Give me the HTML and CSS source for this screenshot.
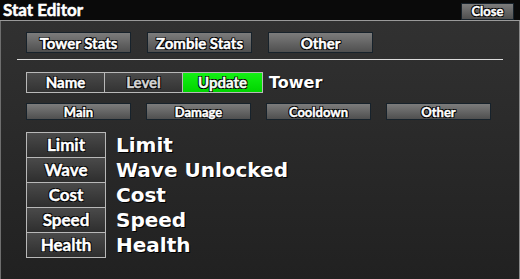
FILE: index.html
```html
<!DOCTYPE html>
<html lang="en">
<head>
    <meta charset="UTF-8">
    <title>Stat Editor</title>
    <link rel="stylesheet" href="styles.css">
</head>
<body>
    <div class="window">
        <div class="titlebar">
            <span class="title">Stat Editor</span>
            <button class="btn close-btn">Close</button>
        </div>
        <div class="content">
            <div class="category-row">
                <button class="btn big">Tower Stats</button>
                <button class="btn big">Zombie Stats</button>
                <button class="btn big">Other</button>
            </div>
            <div class="divider"></div>
            <div class="tab-row">
                <div class="tabs">
                    <div class="tab">Name</div>
                    <div class="tab dim">Level</div>
                    <div class="tab active">Update</div>
                </div>
                <span class="tab-title">Tower</span>
            </div>
            <div class="section-row">
                <button class="btn small">Main</button>
                <button class="btn small">Damage</button>
                <button class="btn small">Cooldown</button>
                <button class="btn small">Other</button>
            </div>
            <div class="stats">
                <div class="stat"><div class="stat-key">Limit</div><span class="stat-name">Limit</span></div>
                <div class="stat"><div class="stat-key">Wave</div><span class="stat-name">Wave Unlocked</span></div>
                <div class="stat"><div class="stat-key">Cost</div><span class="stat-name">Cost</span></div>
                <div class="stat"><div class="stat-key">Speed</div><span class="stat-name">Speed</span></div>
                <div class="stat"><div class="stat-key">Health</div><span class="stat-name">Health</span></div>
            </div>
        </div>
    </div>
</body>
</html>
```

FILE: styles.css
```css
html, body {
    margin: 0;
    padding: 0;
    background: #222;
}
body {
    font-family: Lato, "Liberation Sans", sans-serif;
    color: #fff;
}
.window {
    width: 520px;
    height: 279px;
    display: flex;
    flex-direction: column;
    overflow: hidden;
}
.titlebar {
    height: 20px;
    background: #0a0a0a;
    border-bottom: 1px solid #9a9a9a;
    display: flex;
    align-items: center;
    justify-content: space-between;
}
.title {
    font-weight: 700;
    font-size: 17px;
    padding-left: 3px;
    line-height: 20px;
    -webkit-text-stroke: 0.5px #fff;
}
.btn {
    font-family: Lato, "Liberation Sans", sans-serif;
    font-weight: 700;
    color: #fff;
    background: linear-gradient(#7c7c7c, #4f4f4f);
    border: 1px solid #17222b;
    padding: 0;
    margin: 0;
    -webkit-text-stroke: 0.4px #fff;
    text-shadow: -1px -1px 0 #000, 1px -1px 0 #000, -1px 1px 0 #000, 1px 1px 0 #000,
                 0 1px 0 #000, 0 -1px 0 #000, 1px 0 0 #000, -1px 0 0 #000;
    box-sizing: border-box;
}
.close-btn {
    width: 53px;
    height: 17px;
    font-size: 13px;
    line-height: 14px;
    margin-right: 6px;
    margin-top: 2px;
}
.content {
    flex: 1;
    background: linear-gradient(#313131, #212121);
    border-left: 1px solid #6e6e6e;
    border-right: 1px solid #8a8a8a;
    padding-left: 25px;
}
.category-row {
    display: flex;
    gap: 16px;
    margin-top: 11px;
}
.big {
    width: 105px;
    height: 21px;
    font-size: 15px;
    line-height: 18px;
}
.divider {
    height: 1px;
    background: #dcdcdc;
    margin: 6px 0 0 -9px;
    width: 486px;
}
.tab-row {
    display: flex;
    align-items: center;
    margin-top: 12px;
}
.tabs {
    display: flex;
    height: 21px;
}
.tab {
    box-sizing: border-box;
    width: 79px;
    height: 21px;
    margin-right: -1px;
    border: 1px solid #b8b8b8;
    background: linear-gradient(#4a4a4a, #333);
    font-weight: 700;
    font-size: 15px;
    line-height: 19px;
    text-align: center;
    -webkit-text-stroke: 0.4px currentColor;
    text-shadow: -1px -1px 0 #000, 1px -1px 0 #000, -1px 1px 0 #000, 1px 1px 0 #000;
}
.tab.dim {
    color: #d4d4d4;
}
.tab.active {
    width: 81px;
    background: linear-gradient(#14f014, #00d400);
    color: #f4fff4;
}
.tab-title {
    font-family: "DejaVu Sans", sans-serif;
    font-weight: 700;
    font-size: 16px;
    margin-left: 7px;
    text-shadow: 1px 1px 0 #000;
}
.section-row {
    display: flex;
    gap: 15px;
    margin-top: 10px;
}
.small {
    width: 105px;
    height: 17px;
    font-size: 13px;
    line-height: 14px;
}
.stats {
    margin-top: 13px;
}
.stat {
    display: flex;
    align-items: center;
    margin-top: -1px;
}
.stat-key {
    box-sizing: border-box;
    width: 80px;
    height: 26px;
    border: 1px solid #b8b8b8;
    background: linear-gradient(#4a4a4a, #2e2e2e);
    font-weight: 700;
    font-size: 17px;
    line-height: 23px;
    text-align: center;
    -webkit-text-stroke: 0.4px #fff;
    text-shadow: -1px -1px 0 #000, 1px -1px 0 #000, -1px 1px 0 #000, 1px 1px 0 #000;
}
.stat-name {
    font-family: "DejaVu Sans", sans-serif;
    font-weight: 700;
    font-size: 20px;
    margin-left: 10px;
    text-shadow: 1px 1px 0 #000;
}
```
